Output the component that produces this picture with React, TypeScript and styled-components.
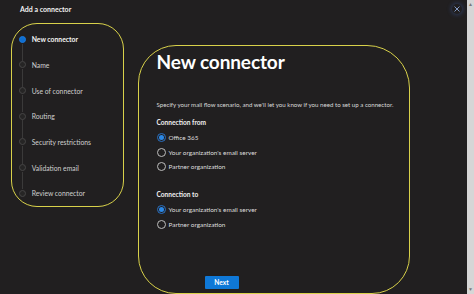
import styled, { createGlobalStyle } from "styled-components";

const GlobalStyle = createGlobalStyle`
  html, body {
    margin: 0;
    padding: 0;
    background: #211f20;
    overflow: hidden;
  }
  * {
    box-sizing: border-box;
  }
`;

const Window = styled.div`
  display: flex;
  width: 474px;
  height: 294px;
  background: #211f20;
  font-family: Lato, "Open Sans", sans-serif;
  color: #e6e6e6;
  overflow: hidden;
`;

const Main = styled.div`
  flex: 1;
  display: flex;
  flex-direction: column;
  min-width: 0;
`;

const Header = styled.div`
  display: flex;
  align-items: center;
  justify-content: space-between;
  height: 17px;
  padding: 0 5px 0 20px;
`;

const DialogTitle = styled.div`
  font-size: 7px;
  font-weight: 700;
  color: #f2f2f2;
  margin-top: 1px;
`;

const CloseButton = styled.div`
  width: 10px;
  height: 10px;
  display: flex;
  align-items: center;
  justify-content: center;
  border-radius: 50%;
  box-shadow: 0 0 4px 1px rgba(60, 90, 160, 0.45);
`;

const Body = styled.div`
  display: flex;
  align-items: flex-start;
  padding: 6px 0 0 11px;
  gap: 14px;
`;

const NavFrame = styled.div`
  width: 113px;
  height: 184px;
  border: 1.5px solid #d8d14a;
  border-radius: 26px;
  padding: 2.5px 0 0 6.7px;
  display: flex;
  flex-direction: column;
`;

const Step = styled.div<{ $last?: boolean }>`
  position: relative;
  display: flex;
  align-items: center;
  gap: 6px;
  height: 25.7px;

  &::after {
    content: "";
    display: ${(p) => (p.$last ? "none" : "block")};
    position: absolute;
    left: 3.5px;
    top: 17px;
    width: 1px;
    height: 17.5px;
    background: #3b3a3a;
  }
`;

const StepDot = styled.div<{ $active?: boolean }>`
  width: 7px;
  height: 7px;
  border-radius: 50%;
  flex-shrink: 0;
  background: ${(p) => (p.$active ? "#0f6fd1" : "#262525")};
  border: 1px solid ${(p) => (p.$active ? "#1a7ae0" : "#474646")};
`;

const StepLabel = styled.div<{ $active?: boolean }>`
  font-size: 6.8px;
  font-weight: ${(p) => (p.$active ? 700 : 400)};
  color: ${(p) => (p.$active ? "#f5f5f5" : "#cfcfcf")};
`;

const ContentFrame = styled.div`
  margin-top: 22px;
  width: 272px;
  height: 249px;
  border: 1.5px solid #d8d14a;
  border-radius: 38px 43px 38px 38px;
  padding: 4px 0 0 17.5px;
  display: flex;
  flex-direction: column;
`;

const PageTitle = styled.h1`
  margin: 0;
  font-size: 19px;
  font-weight: 700;
  line-height: 24px;
  color: #ffffff;
  letter-spacing: -0.1px;
`;

const Description = styled.p`
  margin: 26px 0 0;
  font-size: 6.15px;
  line-height: 9px;
  color: #d8d8d8;
  white-space: nowrap;
`;

const SectionLabel = styled.div<{ $gap: number }>`
  margin-top: ${(p) => p.$gap}px;
  font-size: 6.6px;
  font-weight: 700;
  color: #f0f0f0;
  line-height: 9px;
`;

const RadioGroup = styled.div`
  display: flex;
  flex-direction: column;
  margin-top: 3.5px;
`;

const RadioRow = styled.div`
  display: flex;
  align-items: center;
  gap: 3px;
  height: 14.5px;
`;

const RadioCircle = styled.div<{ $checked?: boolean }>`
  width: 9px;
  height: 9px;
  border-radius: 50%;
  flex-shrink: 0;
  display: flex;
  align-items: center;
  justify-content: center;
  border: 1px solid ${(p) => (p.$checked ? "#2a6fc0" : "#bdbdbd")};

  &::after {
    content: "";
    display: ${(p) => (p.$checked ? "block" : "none")};
    width: 5px;
    height: 5px;
    border-radius: 50%;
    background: #2b88e6;
  }
`;

const RadioLabel = styled.div`
  font-size: 6.4px;
  color: #dedede;
`;

const Footer = styled.div`
  margin-top: auto;
  padding: 0 0 4px 48px;
`;

const NextButton = styled.button`
  width: 34px;
  height: 13.5px;
  border: none;
  border-radius: 1px;
  background: #0f78d7;
  color: #ffffff;
  font-family: inherit;
  font-size: 6.6px;
  font-weight: 700;
  padding: 0;
`;

const Scrollbar = styled.div`
  width: 7px;
  display: flex;
  flex-direction: column;
  justify-content: space-between;
  align-items: center;
  background: #d6d6d6;
  padding: 2px 0;
  color: #7a7a7a;
  font-size: 5px;
  line-height: 5px;
`;

const steps = [
  "New connector",
  "Name",
  "Use of connector",
  "Routing",
  "Security restrictions",
  "Validation email",
  "Review connector",
];

type Option = { label: string; checked?: boolean };

const fromOptions: Option[] = [
  { label: "Office 365", checked: true },
  { label: "Your organization's email server" },
  { label: "Partner organization" },
];

const toOptions: Option[] = [
  { label: "Your organization's email server", checked: true },
  { label: "Partner organization" },
];

const Radios = ({ options }: { options: Option[] }) => (
  <RadioGroup>
    {options.map((o) => (
      <RadioRow key={o.label}>
        <RadioCircle $checked={o.checked} />
        <RadioLabel>{o.label}</RadioLabel>
      </RadioRow>
    ))}
  </RadioGroup>
);

const App = () => {
  return (
    <>
      <GlobalStyle />
      <Window>
        <Main>
          <Header>
            <DialogTitle>Add a connector</DialogTitle>
            <CloseButton>
              <svg width="6" height="6" viewBox="0 0 6 6">
                <path d="M0.5 0.5 L5.5 5.5 M5.5 0.5 L0.5 5.5" stroke="#8fa8d8" strokeWidth="0.9" />
              </svg>
            </CloseButton>
          </Header>
          <Body>
            <NavFrame>
              {steps.map((s, i) => (
                <Step key={s} $last={i === steps.length - 1}>
                  <StepDot $active={i === 0} />
                  <StepLabel $active={i === 0}>{s}</StepLabel>
                </Step>
              ))}
            </NavFrame>
            <ContentFrame>
              <PageTitle>New connector</PageTitle>
              <Description>
                Specify your mail flow scenario, and we'll let you know if you need to set up a connector.
              </Description>
              <SectionLabel $gap={9}>Connection from</SectionLabel>
              <Radios options={fromOptions} />
              <SectionLabel $gap={16}>Connection to</SectionLabel>
              <Radios options={toOptions} />
              <Footer>
                <NextButton>Next</NextButton>
              </Footer>
            </ContentFrame>
          </Body>
        </Main>
        <Scrollbar>
          <span>▲</span>
          <span>▼</span>
        </Scrollbar>
      </Window>
    </>
  );
};

export default App;
